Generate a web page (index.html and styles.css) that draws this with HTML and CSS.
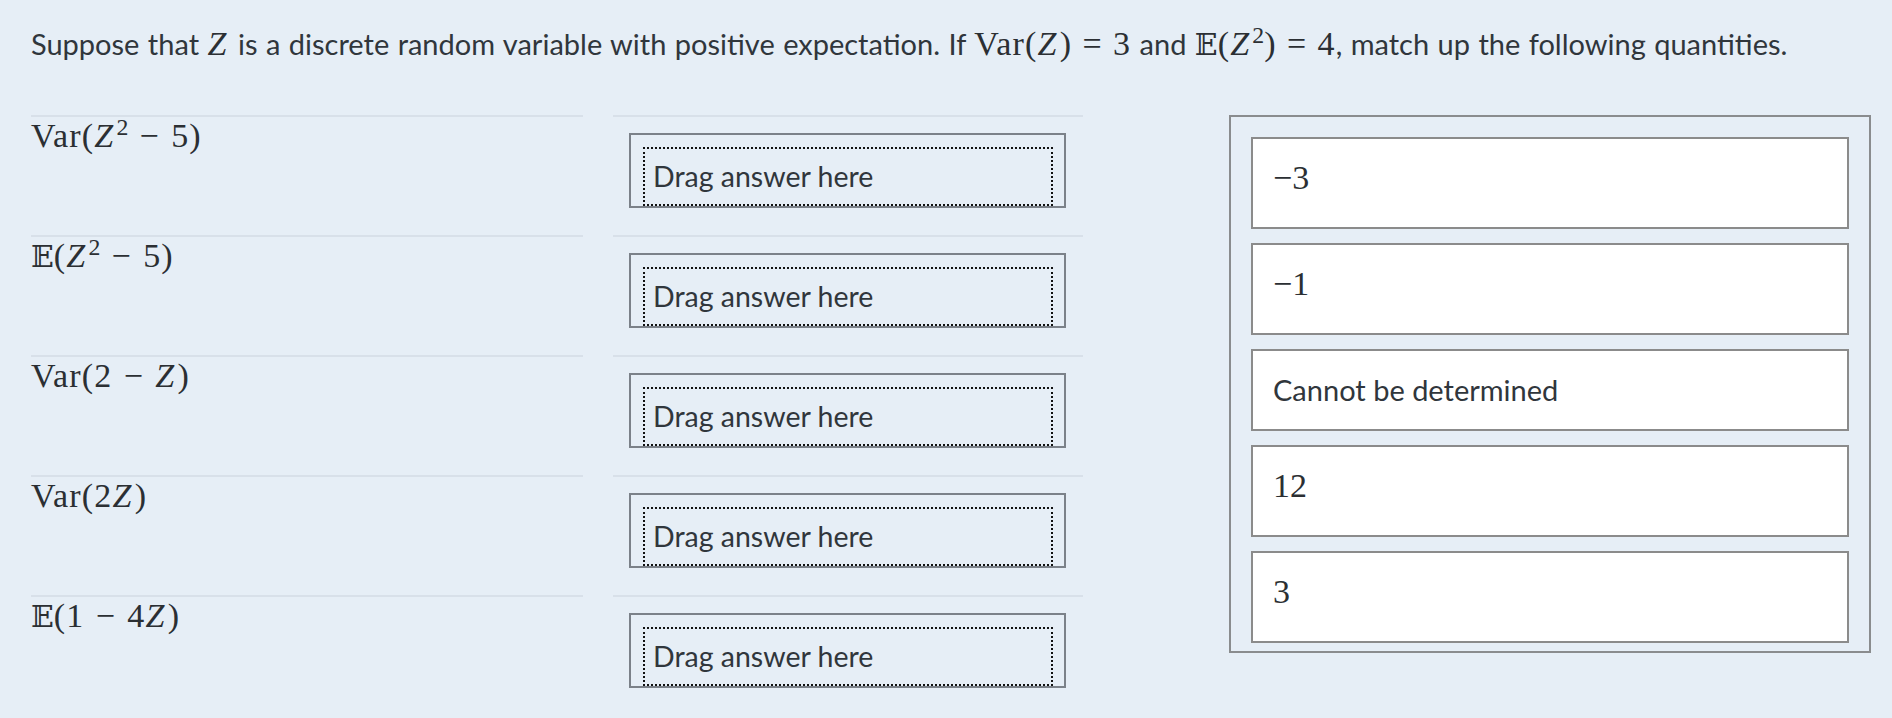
FILE: index.html
```html
<!DOCTYPE html>
<html lang="en">
<head>
<meta charset="utf-8">
<title>Matching question</title>
<link rel="stylesheet" href="styles.css">
</head>
<body>
<div class="page">
  <p class="prompt">Suppose that <span class="m"><i>Z</i></span> is a discrete random variable with positive expectation. If <span class="m">Var(<i>Z</i>)<span class="rel">=</span>3</span> and <span class="m"><span class="bb">𝔼</span>(<i>Z</i><sup>2</sup>)<span class="rel">=</span>4</span>, match up the following quantities.</p>

  <div class="main">
    <div class="pairs">
      <div class="label"><span class="m">Var(<i>Z</i><sup>2</sup><span class="op">−</span>5)</span></div>
      <div class="slot"><div class="drop"><div class="target">Drag answer here</div></div></div>

      <div class="label"><span class="m"><span class="bb">𝔼</span>(<i>Z</i><sup>2</sup><span class="op">−</span>5)</span></div>
      <div class="slot"><div class="drop"><div class="target">Drag answer here</div></div></div>

      <div class="label"><span class="m">Var(2<span class="op">−</span><i>Z</i>)</span></div>
      <div class="slot"><div class="drop"><div class="target">Drag answer here</div></div></div>

      <div class="label"><span class="m">Var(2<i>Z</i>)</span></div>
      <div class="slot"><div class="drop"><div class="target">Drag answer here</div></div></div>

      <div class="label"><span class="m"><span class="bb">𝔼</span>(1<span class="op">−</span>4<i>Z</i>)</span></div>
      <div class="slot"><div class="drop"><div class="target">Drag answer here</div></div></div>
    </div>

    <div class="bank">
      <div class="item math"><span class="m">−3</span></div>
      <div class="item math"><span class="m">−1</span></div>
      <div class="item text">Cannot be determined</div>
      <div class="item math"><span class="m">12</span></div>
      <div class="item math"><span class="m">3</span></div>
    </div>
  </div>
</div>
</body>
</html>
```

FILE: styles.css
```css
html, body {
  margin: 0;
  padding: 0;
  background: #e6eef6;
}

body {
  font-family: Lato, "Open Sans", sans-serif;
  font-size: 29px;
  color: #30363c;
}

.page {
  padding: 24px 21px 0 31px;
}

.prompt {
  margin: 0 0 51px 0;
  line-height: 40px;
  height: 40px;
  white-space: nowrap;
  word-spacing: 1px;
}

.m {
  font-family: "Liberation Serif", "DejaVu Serif", serif;
  font-size: 34px;
  line-height: 1;
  color: #2b2f33;
  letter-spacing: 1.2px;
  word-spacing: 0;
}

.m i {
  font-style: italic;
  padding-right: 2px;
}

.m sup {
  font-size: 0.7em;
  line-height: 0;
  vertical-align: 0.5em;
  letter-spacing: 0;
}

.m .rel {
  margin: 0 0.3em;
}

.m .op {
  margin: 0 0.33em;
}

.bb {
  font-family: "DejaVu Serif", "DejaVu Sans", serif;
  font-weight: normal;
  font-size: 0.88em;
  letter-spacing: 0;
}

.main {
  display: flex;
  align-items: flex-start;
}

.pairs {
  display: grid;
  grid-template-columns: 552px 470px;
  column-gap: 30px;
}

.label,
.slot {
  box-sizing: border-box;
  height: 120px;
  border-top: 2px solid #d8e0e9;
}

.label {
  line-height: 36px;
  padding-top: 1px;
}

.drop {
  box-sizing: border-box;
  height: 75px;
  margin: 16px 17px 0 16px;
  border: 2px solid #7b8189;
  padding: 12px 11px 0 12px;
}

.target {
  box-sizing: border-box;
  height: 59px;
  border: 2px dotted #111;
  padding-left: 8px;
  font-size: 28.5px;
  line-height: 55px;
}

.bank {
  box-sizing: border-box;
  width: 642px;
  margin-left: 146px;
  border: 2px solid #8a8c8e;
  padding: 20px 20px 8px 20px;
  display: flex;
  flex-direction: column;
  gap: 14px;
}

.item {
  background: #fff;
  border: 2px solid #8b8b8b;
  padding: 20px 20px 20px 20px;
  line-height: 38px;
  height: 38px;
}

.item.math {
  padding-bottom: 30px;
}

.item .m {
  letter-spacing: 0;
  line-height: 38px;
}
```
